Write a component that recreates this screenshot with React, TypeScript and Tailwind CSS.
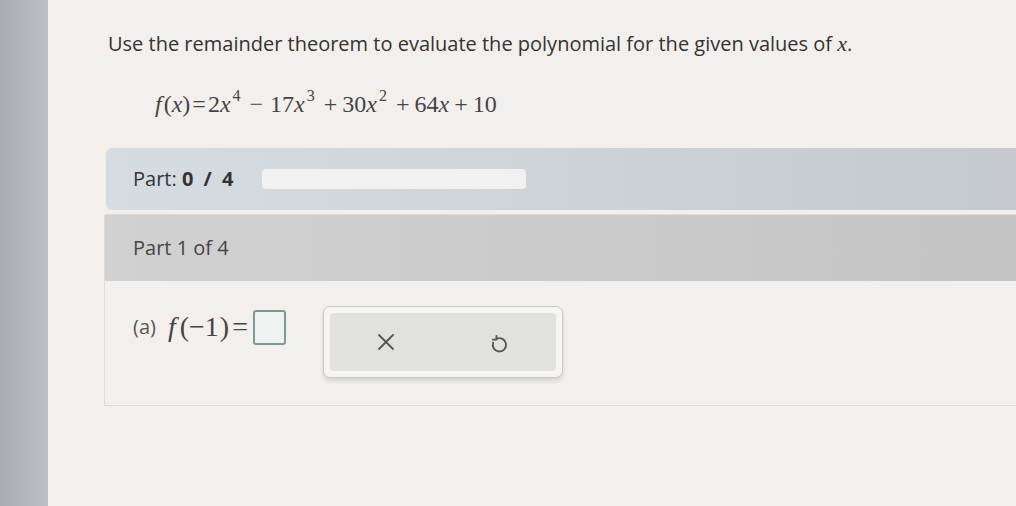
import React from "react";

const serif = { fontFamily: '"Liberation Serif", "Times New Roman", serif' };

const Sup: React.FC<{ children: React.ReactNode }> = ({ children }) => (
  <sup className="relative -top-[11px] text-[16px] ml-[2px] mr-[9px]">{children}</sup>
);

const App: React.FC = () => {
  return (
    <div
      className="w-[1016px] h-[506px] flex bg-[#f3efed] text-[#333] overflow-hidden"
      style={{ fontFamily: '"Open Sans", "Noto Sans", sans-serif' }}
    >
      {/* left rail */}
      <div className="w-[48px] flex-shrink-0 bg-gradient-to-r from-[#a9adb1] to-[#bcc0c3]" />

      <div className="flex-1 flex flex-col pl-[56px] pt-[32px]">
        <p className="text-[20px] leading-[24px] pl-[4px]">
          Use the remainder theorem to evaluate the polynomial for the given values of{" "}
          <span className="italic text-[22px]" style={serif}>x</span>.
        </p>

        {/* polynomial */}
        <div className="mt-[33px] pl-[51px] text-[24px] leading-[30px] text-[#444] flex items-baseline" style={serif}>
          <span className="italic">f</span>
          <span className="ml-[2px]">(</span>
          <span className="italic">x</span>
          <span>)</span>
          <span className="mx-[2px]">=</span>
          <span>2</span>
          <span className="italic">x</span>
          <Sup>4</Sup>
          <span className="mr-[7px]">−</span>
          <span>17</span>
          <span className="italic">x</span>
          <Sup>3</Sup>
          <span className="mr-[5px]">+</span>
          <span>30</span>
          <span className="italic">x</span>
          <Sup>2</Sup>
          <span className="mr-[5px]">+</span>
          <span>64</span>
          <span className="italic">x</span>
          <span className="mx-[5px]">+</span>
          <span>10</span>
        </div>

        {/* progress bar */}
        <div className="mt-[29px] ml-[2px] h-[62px] rounded-l-[6px] bg-gradient-to-r from-[#d6dde2] to-[#c5c9cd] flex items-center pl-[27px]">
          <span className="text-[20px]">
            Part: <span className="font-bold tracking-[1px]">0 <span className="mx-[3px]">/</span> 4</span>
          </span>
          <div className="ml-[28px] w-[264px] h-[20px] rounded-[4px] bg-[#f1f1f1]" />
        </div>

        {/* part 1 card */}
        <div className="mt-[4px] border border-[#dedad8] border-r-0 rounded-tl-[3px]">
          <div className="h-[66px] bg-gradient-to-r from-[#d0d1d0] to-[#c4c4c4] flex items-center pl-[28px]">
            <span className="text-[20px] text-[#444]">Part 1 of 4</span>
          </div>
          <div className="h-[124px] flex items-start pl-[28px] pt-[25px]">
            <div className="flex items-center">
              <span className="text-[20px] text-[#555]">(a)</span>
              <span className="text-[28px] text-[#444] ml-[12px] flex items-baseline" style={serif}>
                <span className="italic">f</span>
                <span className="ml-[4px]">(</span>
                <span>−1</span>
                <span className="ml-[1px]">)</span>
                <span className="ml-[3px]">=</span>
              </span>
              <div className="ml-[5px] w-[33px] h-[35px] border-[2px] border-[#7a9a98] rounded-[3px] bg-[#eef3f2]" />
            </div>
            <div className="ml-[37px] w-[240px] h-[72px] rounded-[7px] border border-[#c8c8c8] bg-[#f7f5f4] p-[6px] shadow-[0_3px_4px_rgba(0,0,0,0.12)]">
              <div className="h-full rounded-[4px] bg-[#e1e1e0] flex items-center justify-around text-[#555]">
                <svg width="18" height="18" viewBox="0 0 18 18" fill="none" stroke="currentColor" strokeWidth="1.8" strokeLinecap="round">
                  <path d="M2 2L16 16M16 2L2 16" />
                </svg>
                <svg width="20" height="20" viewBox="0 0 24 24" fill="none" stroke="currentColor" strokeWidth="2.2" strokeLinecap="round" strokeLinejoin="round" className="mt-[6px]">
                  <path d="M9 4.6A8 8 0 1 1 5 9" />
                  <path d="M9 1v4.5H4.5" />
                </svg>
              </div>
            </div>
          </div>
        </div>
      </div>
    </div>
  );
};

export default App;
